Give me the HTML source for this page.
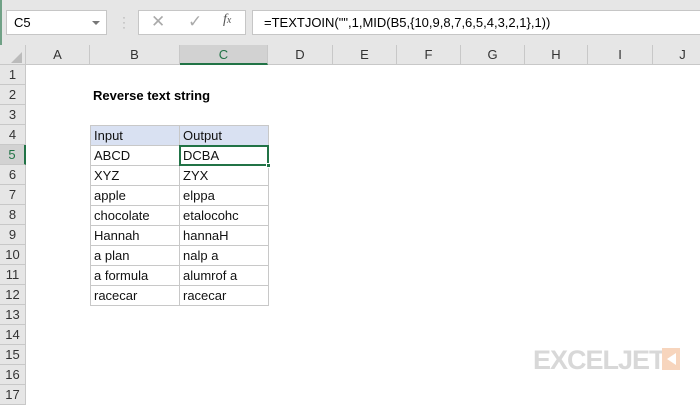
<!DOCTYPE html>
<html><head><style>
*{margin:0;padding:0;box-sizing:border-box}
body{width:700px;height:400px;overflow:hidden;background:#fff;font-family:"Liberation Sans",Calibri,sans-serif;position:relative}
.a{position:absolute}
.top{left:0;top:0;width:700px;height:45px;background:#e6e6e6}
.box{background:#fff;border:1px solid #c6c6c6}
.ch{top:45px;height:20px;background:#e6e6e6;border-right:1px solid #c8c8c8;border-bottom:1px solid #c8c8c8;font-size:13px;color:#333;text-align:center;line-height:20px}
.rh{left:0;width:26px;height:20px;background:#e6e6e6;border-bottom:1px solid #c8c8c8;border-right:1px solid #c8c8c8;font-size:13px;color:#333;text-align:center;line-height:20px}
.c{height:21px;border:1px solid #c8c8c8;font-size:13px;line-height:19px;padding-left:3px;color:#111}
</style></head><body>
<div class="a top"></div>
<div class="a box" style="left:6px;top:10px;width:101px;height:25px;font-size:13px;line-height:23px;padding-left:7px">C5</div>
<div class="a" style="left:92px;top:21px;border-left:4px solid transparent;border-right:4px solid transparent;border-top:4px solid #777"></div>
<div class="a" style="left:122px;top:15px;color:#aaa;font-size:12px;line-height:5px">·<br>·<br>·</div>
<div class="a box" style="left:138px;top:10px;width:108px;height:25px"></div>
<div class="a" style="left:151px;top:12px;color:#aaa;font-size:17px">✕</div>
<div class="a" style="left:188px;top:12px;color:#aaa;font-size:17px">✓</div>
<div class="a" style="left:223px;top:12px;color:#555;font-size:14px;font-style:italic;font-family:'Liberation Serif',serif">f<span style="font-size:10px">x</span></div>
<div class="a box" style="left:252px;top:10px;width:460px;height:25px;font-size:13px;line-height:23px;padding-left:11px">=TEXTJOIN("",1,MID(B5,{10,9,8,7,6,5,4,3,2,1},1))</div>
<div class="a" style="left:0;top:0;width:2px;height:400px;background:#217346;opacity:.6"></div>
<div class="a ch" style="left:0;width:26px"></div>
<div class="a" style="left:11px;top:52px;border-left:11px solid transparent;border-bottom:11px solid #bbb"></div>
<div class="a ch" style="left:26px;width:64px">A</div>
<div class="a ch" style="left:90px;width:90px">B</div>
<div class="a ch" style="left:180px;width:88px;background:#d2d2d2;border-bottom:2px solid #217346;color:#217346">C</div>
<div class="a ch" style="left:268px;width:65px">D</div>
<div class="a ch" style="left:333px;width:64px">E</div>
<div class="a ch" style="left:397px;width:64px">F</div>
<div class="a ch" style="left:461px;width:64px">G</div>
<div class="a ch" style="left:525px;width:63px">H</div>
<div class="a ch" style="left:588px;width:65px">I</div>
<div class="a ch" style="left:653px;width:60px">J</div>
<div class="a rh" style="top:65px">1</div><div class="a rh" style="top:85px">2</div><div class="a rh" style="top:105px">3</div><div class="a rh" style="top:125px">4</div>
<div class="a rh" style="top:145px;background:#d2d2d2;color:#217346;border-right:2px solid #217346">5</div>
<div class="a rh" style="top:165px">6</div><div class="a rh" style="top:185px">7</div><div class="a rh" style="top:205px">8</div><div class="a rh" style="top:225px">9</div><div class="a rh" style="top:245px">10</div><div class="a rh" style="top:265px">11</div><div class="a rh" style="top:285px">12</div><div class="a rh" style="top:305px">13</div><div class="a rh" style="top:325px">14</div><div class="a rh" style="top:345px">15</div><div class="a rh" style="top:365px">16</div><div class="a rh" style="top:385px">17</div>
<div class="a" style="left:93px;top:88px;font-size:13px;font-weight:bold">Reverse text string</div>
<div class="a c" style="left:90px;top:125px;width:90px;background:#d9e1f2">Input</div>
<div class="a c" style="left:179px;top:125px;width:90px;background:#d9e1f2">Output</div>
<div class="a c" style="left:90px;top:145px;width:90px">ABCD</div><div class="a c" style="left:179px;top:145px;width:90px">DCBA</div>
<div class="a c" style="left:90px;top:165px;width:90px">XYZ</div><div class="a c" style="left:179px;top:165px;width:90px">ZYX</div>
<div class="a c" style="left:90px;top:185px;width:90px">apple</div><div class="a c" style="left:179px;top:185px;width:90px">elppa</div>
<div class="a c" style="left:90px;top:205px;width:90px">chocolate</div><div class="a c" style="left:179px;top:205px;width:90px">etalocohc</div>
<div class="a c" style="left:90px;top:225px;width:90px">Hannah</div><div class="a c" style="left:179px;top:225px;width:90px">hannaH</div>
<div class="a c" style="left:90px;top:245px;width:90px">a plan</div><div class="a c" style="left:179px;top:245px;width:90px">nalp a</div>
<div class="a c" style="left:90px;top:265px;width:90px">a formula</div><div class="a c" style="left:179px;top:265px;width:90px">alumrof a</div>
<div class="a c" style="left:90px;top:285px;width:90px">racecar</div><div class="a c" style="left:179px;top:285px;width:90px">racecar</div>
<div class="a" style="left:179px;top:145px;width:90px;height:21px;border:2px solid #217346"></div>
<div class="a" style="left:266px;top:163px;width:5px;height:5px;background:#217346;border:1px solid #fff"></div>
<div class="a" style="left:533px;top:345px;font-size:27px;font-weight:bold;color:#d8d8d8;letter-spacing:-1px">EXCELJET</div>
<div class="a" style="left:662px;top:348px;width:18px;height:22px;background:#f7d5bd"></div>
<div class="a" style="left:667px;top:353px;border-right:9px solid #fff;border-top:6px solid transparent;border-bottom:6px solid transparent"></div>
</body></html>
